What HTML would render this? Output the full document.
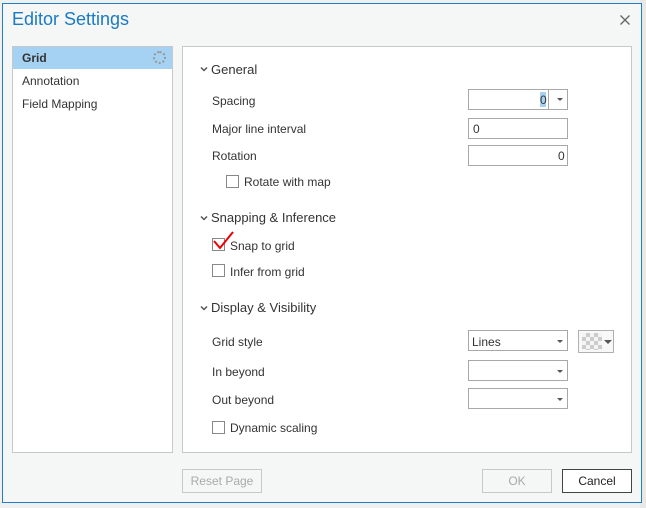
<!DOCTYPE html>
<html><head><style>
*{margin:0;padding:0;box-sizing:border-box}
body{width:646px;height:508px;background:#f0f0f0;position:relative;overflow:hidden;font-family:"Liberation Sans",sans-serif;font-size:12px;color:#333}
.a{position:absolute}
.dlg{left:2px;top:3px;width:640px;height:500px;background:#f5f6f6;border:1px solid #1e7fc8}
.box{background:#fff;border:1px solid #c8c8c8}
.in{background:#fff;border:1px solid #a8a8a8;height:21px}
.cb{width:13px;height:13px;border:1px solid #888;background:#fff}
.arr{width:0;height:0;border-left:3px solid transparent;border-right:3px solid transparent;border-top:3px solid #555}
.btn{border:1px solid #c8c8c8;background:#f5f6f6;color:#aaa;text-align:center;line-height:22px}
</style></head><body>
<div class="a" style="left:640px;top:0;width:6px;height:508px;background:#e8e8e8"></div>
<div class="a dlg"></div>
<div class="a" style="left:12px;top:9px;font-size:18px;color:#1a7ac4">Editor Settings</div>
<svg class="a" style="left:619px;top:14px" width="12" height="12"><path d="M1.5 1.5L10.5 10.5M10.5 1.5L1.5 10.5" stroke="#666" stroke-width="1.3"/></svg>
<div class="a box" style="left:12px;top:46px;width:161px;height:407px"></div>
<div class="a" style="left:13px;top:47px;width:159px;height:22px;background:#a5d2f2"></div>
<div class="a" style="left:22px;top:51px;font-weight:bold">Grid</div>
<div class="a" style="left:153px;top:51px;width:13px;height:13px;border:2px dotted #999;border-radius:50%"></div>
<div class="a" style="left:22px;top:74px">Annotation</div>
<div class="a" style="left:22px;top:97px">Field Mapping</div>
<div class="a box" style="left:182px;top:46px;width:450px;height:407px"></div>
<svg class="a" style="left:200px;top:66px" width="8" height="6"><path d="M1 1.5L4 4.5L7 1.5" stroke="#555" stroke-width="1.5" fill="none"/></svg>
<div class="a" style="left:211px;top:62px;font-size:13px">General</div>
<div class="a" style="left:212px;top:94px">Spacing</div>
<div class="a in" style="left:468px;top:89px;width:100px"></div>
<div class="a" style="left:548px;top:90px;width:1px;height:19px;background:#a8a8a8"></div>
<div class="a" style="left:540px;top:92px;width:6px;height:15px;background:#a5d2f2"></div>
<div class="a" style="left:540px;top:93px">0</div>
<div class="a arr" style="left:557px;top:98px"></div>
<div class="a" style="left:212px;top:122px">Major line interval</div>
<div class="a in" style="left:468px;top:118px;width:100px"></div>
<div class="a" style="left:473px;top:122px">0</div>
<div class="a" style="left:212px;top:149px">Rotation</div>
<div class="a in" style="left:468px;top:145px;width:100px"></div>
<div class="a" style="left:558px;top:149px">0</div>
<div class="a cb" style="left:226px;top:175px"></div>
<div class="a" style="left:244px;top:175px">Rotate with map</div>
<svg class="a" style="left:200px;top:215px" width="8" height="6"><path d="M1 1.5L4 4.5L7 1.5" stroke="#555" stroke-width="1.5" fill="none"/></svg>
<div class="a" style="left:211px;top:210px;font-size:13px">Snapping &amp; Inference</div>
<div class="a cb" style="left:212px;top:238px"></div>
<svg class="a" style="left:212px;top:230px" width="24" height="22"><path d="M2 11 L8 18 L21 2" stroke="#e00" stroke-width="2" fill="none"/></svg>
<div class="a" style="left:230px;top:239px">Snap to grid</div>
<div class="a cb" style="left:212px;top:264px"></div>
<div class="a" style="left:230px;top:265px">Infer from grid</div>
<svg class="a" style="left:200px;top:305px" width="8" height="6"><path d="M1 1.5L4 4.5L7 1.5" stroke="#555" stroke-width="1.5" fill="none"/></svg>
<div class="a" style="left:211px;top:300px;font-size:13px">Display &amp; Visibility</div>
<div class="a" style="left:212px;top:335px">Grid style</div>
<div class="a in" style="left:468px;top:330px;width:100px"></div>
<div class="a" style="left:472px;top:335px">Lines</div>
<div class="a arr" style="left:557px;top:340px"></div>
<div class="a" style="left:578px;top:330px;width:36px;height:23px;border:1px solid #b0b0b0;background:#f8f8f8"></div>
<div class="a" style="left:582px;top:333px;width:20px;height:17px;background:repeating-conic-gradient(#ccc 0 25%,#f4f4f4 0 50%) 0 0/8px 8px"></div>
<div class="a arr" style="left:604px;top:340px;border-left-width:4px;border-right-width:4px;border-top-width:4px"></div>
<div class="a" style="left:212px;top:365px">In beyond</div>
<div class="a in" style="left:468px;top:360px;width:100px"></div>
<div class="a arr" style="left:557px;top:370px"></div>
<div class="a" style="left:212px;top:393px">Out beyond</div>
<div class="a in" style="left:468px;top:388px;width:100px"></div>
<div class="a arr" style="left:557px;top:398px"></div>
<div class="a cb" style="left:212px;top:421px"></div>
<div class="a" style="left:230px;top:421px">Dynamic scaling</div>
<div class="a btn" style="left:182px;top:469px;width:80px;height:24px">Reset Page</div>
<div class="a btn" style="left:482px;top:469px;width:70px;height:24px">OK</div>
<div class="a btn" style="left:562px;top:469px;width:70px;height:24px;border-color:#444;background:#fff;color:#222">Cancel</div>
</body></html>
